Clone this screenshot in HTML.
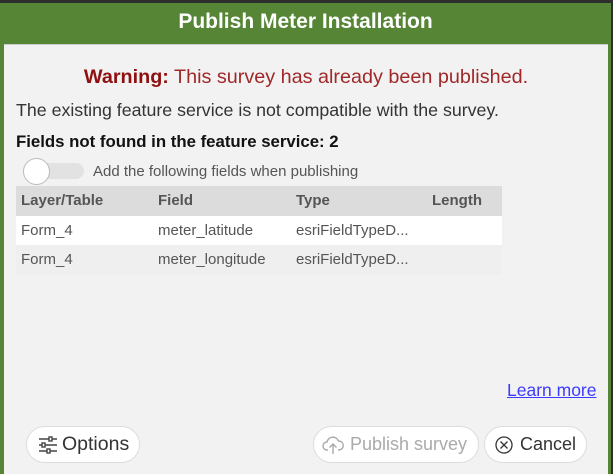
<!DOCTYPE html>
<html><head><style>
*{margin:0;padding:0;box-sizing:border-box}
body{width:613px;height:474px;background:#2d2d2d;position:relative;overflow:hidden;font-family:"Liberation Sans",sans-serif}
.win{position:absolute;left:0;top:3px;width:611px;height:471px;background:#568535}
.hdr{position:absolute;left:0;top:0;width:611px;height:40px;color:#fff;font-size:21px;text-align:center;line-height:38px;font-weight:bold}
.bd{position:absolute;left:4px;top:41px;width:604px;height:430px;background:#f2f2f2;border-top:1px solid #ccc}
.t{position:absolute;white-space:nowrap}
.tbl{position:absolute;left:12px;top:141px;width:486px;font-size:15px;color:#555}
.tr{height:29.5px;line-height:29.5px;position:relative}
.tr span{position:absolute}
.btn{position:absolute;top:381px;height:37px;border-radius:19px;background:#fff;border:1px solid #ddd;font-size:18px;line-height:35px;color:#333}
</style></head><body>
<div class="win">
<div class="hdr">Publish Meter Installation</div>
<div class="bd">
<div class="t" style="left:0;width:604px;text-align:center;top:21px;font-size:19.8px;color:#a02828"><b style="color:#8f1010">Warning:</b> This survey has already been published.</div>
<div class="t" style="left:12px;top:55px;font-size:17.8px;color:#333">The existing feature service is not compatible with the survey.</div>
<div class="t" style="left:12px;top:87px;font-size:16.8px;color:#111;font-weight:bold">Fields not found in the feature service: 2</div>
<div style="position:absolute;left:24px;top:118px;width:56px;height:16px;border-radius:8px;background:#e2e2e2"></div>
<div style="position:absolute;left:19px;top:113px;width:27px;height:27px;border-radius:50%;background:#fff;border:1px solid #bbb"></div>
<div class="t" style="left:89px;top:118px;font-size:15px;color:#555">Add the following fields when publishing</div>
<div class="tbl">
<div class="tr" style="background:#dcdcdc;font-weight:bold;color:#555"><span style="left:5px">Layer/Table</span><span style="left:142px">Field</span><span style="left:280px">Type</span><span style="left:416px">Length</span></div>
<div class="tr" style="background:#fff"><span style="left:5px">Form_4</span><span style="left:142px">meter_latitude</span><span style="left:280px">esriFieldTypeD...</span></div>
<div class="tr" style="background:#efefef"><span style="left:5px">Form_4</span><span style="left:142px">meter_longitude</span><span style="left:280px">esriFieldTypeD...</span></div>
</div>
<div class="t" style="left:503px;top:335px;font-size:17.5px;color:#3b3bff;text-decoration:underline">Learn more</div>
<div class="btn" style="left:22px;width:114px"><svg style="position:absolute;left:11px;top:9px" width="20" height="18" viewBox="0 0 20 18" stroke="#444" stroke-width="1.4" fill="none"><line x1="1" y1="3" x2="19" y2="3"/><line x1="1" y1="9" x2="19" y2="9"/><line x1="1" y1="15" x2="19" y2="15"/><rect x="11" y="1" width="3" height="4" fill="#fff"/><rect x="4" y="7" width="3" height="4" fill="#fff"/><rect x="9" y="13" width="3" height="4" fill="#fff"/></svg><span style="position:absolute;left:35px;font-size:19.5px">Options</span></div>
<div class="btn" style="left:309px;width:166px;color:#aaa"><svg style="position:absolute;left:8px;top:8px" width="22" height="20" viewBox="0 0 22 20" stroke="#aaa" stroke-width="1.4" fill="none"><path d="M6 15H5a4 4 0 0 1 0-8 6 6 0 0 1 11.5-1A4.5 4.5 0 0 1 17 15h-1"/><path d="M11 19V9M7.5 12.5L11 9l3.5 3.5"/></svg><span style="position:absolute;left:36px">Publish survey</span></div>
<div class="btn" style="left:480px;width:103px"><svg style="position:absolute;left:10px;top:9px" width="18" height="18" viewBox="0 0 18 18" stroke="#333" stroke-width="1.3" fill="none"><circle cx="9" cy="9" r="8"/><path d="M5.5 5.5l7 7M12.5 5.5l-7 7"/></svg><span style="position:absolute;left:35px">Cancel</span></div>
</div>
</div>
</body></html>
